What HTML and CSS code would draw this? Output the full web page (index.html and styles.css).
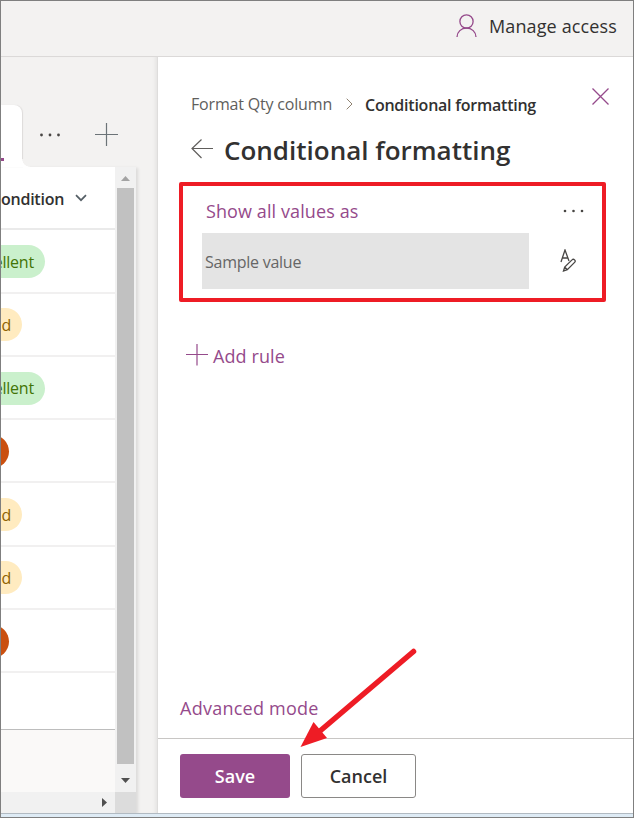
FILE: index.html
```html
<!DOCTYPE html>
<html lang="en">
<head>
  <meta charset="UTF-8">
  <title>Conditional formatting</title>
  <link rel="stylesheet" href="styles.css">
</head>
<body>
  <div class="window">
    <header class="topbar">
      <svg class="person" width="22" height="24" viewBox="0 0 22 24">
        <circle cx="10.500" cy="7.500" r="6.600"/>
        <path d="M1 23a9.500 9 0 0 1 19 0"/>
      </svg>
      <span class="manage">Manage access</span>
    </header>

    <main class="main">
      <section class="list">
        <div class="tabs">
          <div class="tab"><span class="tab-mark"></span></div>
          <svg class="dots tab-dots" width="20" height="4" viewBox="0 0 20 4"><circle cx="1.5" cy="2" r="1.4"/><circle cx="10" cy="2" r="1.4"/><circle cx="18.5" cy="2" r="1.4"/></svg>
          <svg class="tab-plus" width="23" height="23" viewBox="0 0 23 23"><path d="M0 11.5h23M11.5 0v23"/></svg>
        </div>
        <div class="sheet">
          <div class="grid">
            <div class="row head"><span class="head-text">ondition</span>
              <svg class="chevron" width="12" height="8" viewBox="0 0 12 8"><path d="M1 1.2l5 5 5-5"/></svg>
            </div>
            <div class="row"><span class="pill green">ellent</span></div>
            <div class="row"><span class="pill yellow">d</span></div>
            <div class="row"><span class="pill green">ellent</span></div>
            <div class="row"><span class="pill red"></span></div>
            <div class="row"><span class="pill yellow">d</span></div>
            <div class="row"><span class="pill yellow">d</span></div>
            <div class="row"><span class="pill red"></span></div>
            <div class="row last"></div>
            <div class="grid-foot"></div>
            <div class="hscroll"><svg width="5" height="9" viewBox="0 0 5 9"><path d="M0 0l5 4.5L0 9z"/></svg></div>
          </div>
          <div class="vscroll">
            <div class="vbtn up"><svg width="9" height="5" viewBox="0 0 9 5"><path d="M0 5l4.500-5L9 5z"/></svg></div>
            <div class="thumb"></div>
            <div class="vbtn down"><svg width="9" height="5" viewBox="0 0 9 5"><path d="M0 0l4.500 5L9 0z"/></svg></div>
            <div class="corner"></div>
          </div>
        </div>
      </section>

      <aside class="panel">
        <div class="crumbs">
          <span class="crumb">Format Qty column</span>
          <svg class="crumb-sep" width="7" height="12" viewBox="0 0 7 12"><path d="M.7.7L6 6 .7 11.300"/></svg>
          <span class="crumb current">Conditional formatting</span>
          <svg class="close" width="17" height="17" viewBox="0 0 17 17"><path d="M.5.5l16 16M16.500.5l-16 16"/></svg>
        </div>
        <div class="title-row">
          <svg class="back" width="22" height="20" viewBox="0 0 22 20"><path d="M22 9.500H1M10.500.5L1 9.500l9.500 9.500"/></svg>
          <h1 class="title">Conditional formatting</h1>
        </div>

        <div class="rule">
          <div class="rule-head">
            <span class="rule-name">Show all values as</span>
            <svg class="dots" width="21" height="4" viewBox="0 0 21 4"><circle cx="2" cy="2" r="1.300"/><circle cx="10.500" cy="2" r="1.300"/><circle cx="19" cy="2" r="1.300"/></svg>
          </div>
          <div class="rule-body">
            <div class="sample">Sample value</div>
            <svg class="edit" width="16" height="23" viewBox="0 0 16 23">
              <path d="M1 13L5 1l4 11M2.400 9h5.700"/>
              <path d="M3.500 22l1.200-4L12 10.900a1.700 1.700 0 0 1 2.600 2.500L7.300 20.700zM4.700 18l2.600 2.700"/>
            </svg>
          </div>
        </div>

        <div class="add">
          <svg class="add-plus" width="22" height="22" viewBox="0 0 22 22"><path d="M0 10.500h22M11 0v21.500"/></svg>
          <span class="add-text">Add rule</span>
        </div>

        <div class="advanced"><span>Advanced mode</span></div>
        <footer class="actions">
          <button class="btn primary">Save</button>
          <button class="btn">Cancel</button>
        </footer>
      </aside>
    </main>
    <div class="statusbar"></div>

    <svg class="arrow" width="120" height="104" viewBox="0 0 120 104">
      <path class="arrow-line" d="M113.500 6.500L20 86"/>
      <path class="arrow-head" d="M.5 102l13-25 13.500 16z"/>
    </svg>
  </div>
</body>
</html>
```

FILE: styles.css
```css
* {
  box-sizing: border-box;
}
body {
  margin: 0;
  font-family: "Open Sans", "Noto Sans", sans-serif;
  font-size: 16px;
  color: #323130;
}
svg {
  display: block;
  flex: none;
  fill: none;
}
.window {
  position: relative;
  display: flex;
  flex-direction: column;
  width: 634px;
  height: 818px;
  border: 1px solid #7f7f7f;
  background: #f3f2f1;
  overflow: hidden;
}
.topbar {
  display: flex;
  align-items: center;
  gap: 11px;
  height: 56px;
  padding: 0 0 5px 455px;
  border-bottom: 1px solid #dbd9d8;
  white-space: nowrap;
}
.person {
  stroke: #954a8b;
  stroke-width: 1.3;
}
.manage {
  font-size: 18px;
  letter-spacing: 0.12px;
}
.main {
  display: flex;
  flex: 1;
  min-height: 0;
}

/* list on the left */
.list {
  width: 157px;
  flex: none;
  border-right: 1px solid #dedddc;
  box-shadow: inset -4px 0 4px -3px rgba(0, 0, 0, 0.08);
}
.tabs {
  display: flex;
  height: 110px;
  padding-top: 48px;
}
.tab {
  position: relative;
  width: 21px;
  height: 62px;
  background: #fff;
  border-radius: 0 8px 0 0;
  box-shadow: 1px 0 1px #dddbda;
}
.tab::after {
  content: "";
  position: absolute;
  left: 21px;
  bottom: 0;
  width: 8px;
  height: 8px;
  background: radial-gradient(circle at 8px 0, #f3f2f1 7.500px, #fff 8px);
}
.tab-mark {
  display: block;
  width: 3px;
  height: 3px;
  margin-top: 53px;
  background: #954a8b;
}
.dots {
  fill: #484644;
}
.tab-dots {
  margin: 28px 0 0 18px;
}
.tab-plus {
  margin: 18px 0 0 35px;
  stroke: #6b7377;
  stroke-width: 1.2;
}
.sheet {
  display: flex;
  width: 135px;
  height: 646px;
  box-shadow: 2px 1px 3px rgba(0, 0, 0, 0.1);
}
.grid {
  width: 114px;
  background: #fff;
}
.row {
  display: flex;
  align-items: center;
  height: 63.250px;
  border-bottom: 2px solid #f1f0f0;
  overflow: hidden;
}
.row.head {
  height: 63.400px;
  padding-top: 2px;
  border-color: #eaeaea;
}
.head-text {
  font-weight: 600;
  letter-spacing: -0.25px;
}
.chevron {
  margin: -2px 0 0 11px;
  stroke: #555f66;
  stroke-width: 1.7;
}
.pill {
  display: flex;
  align-items: center;
  justify-content: flex-end;
  height: 33px;
  margin-top: 1px;
  border-radius: 0 17px 17px 0;
  letter-spacing: -0.2px;
}
.green {
  width: 44px;
  padding-right: 11px;
  background: #caf0cc;
  color: #437406;
}
.yellow {
  width: 21px;
  padding-right: 11px;
  background: #ffebc0;
  color: #8f6200;
}
.red {
  width: 33px;
  margin-left: -25px;
  border-radius: 17px;
  background: #ca5010;
}
.row.last {
  height: 57px;
  border-bottom: 1px solid #bdbdbd;
}
.grid-foot {
  height: 62px;
  background: #faf9f8;
}
.hscroll {
  display: flex;
  align-items: center;
  justify-content: flex-end;
  height: 21px;
  padding-right: 8px;
  background: #f1f1f1;
}
.hscroll svg,
.down svg {
  fill: #505050;
}
.up svg {
  fill: #a3a3a3;
}
.vscroll {
  width: 21px;
  background: #f1f1f1;
}
.vbtn {
  display: flex;
  align-items: center;
  justify-content: center;
  height: 21px;
}
.up {
  padding-top: 2px;
}
.thumb {
  width: 17px;
  height: 576px;
  margin-left: 2px;
  background: #c1c1c1;
}
.down {
  height: 28px;
  padding-top: 5px;
}
.corner {
  height: 21px;
  background: #dcdcdc;
}

/* format panel */
.panel {
  display: flex;
  flex-direction: column;
  flex: 1;
  min-width: 0;
  background: #fff;
}
.crumbs {
  display: flex;
  align-items: center;
  height: 24px;
  margin: 35px 24px 0 33px;
  white-space: nowrap;
}
.crumb {
  width: 141px;
  letter-spacing: -0.18px;
  color: #605e5c;
}
.crumb-sep {
  margin: 0 12px 0 14px;
  stroke: #8f8271;
  stroke-width: 1;
}
.crumb.current {
  width: 173px;
  padding-top: 1px;
  font-weight: 600;
  letter-spacing: -0.24px;
  color: #323130;
}
.close {
  margin: -16px 0 0 auto;
  stroke: #954a8b;
  stroke-width: 1.300;
}
.title-row {
  display: flex;
  align-items: center;
  gap: 11px;
  height: 36px;
  margin: 15px 0 0 33px;
}
.back {
  stroke: #605e5c;
  stroke-width: 1.200;
}
.title {
  margin: 0;
  padding-top: 2px;
  font-size: 26px;
  font-weight: 600;
  line-height: 36px;
  white-space: nowrap;
}
.rule {
  width: 427px;
  height: 120px;
  margin: 15px 0 0 21px;
  padding: 0 18px 0 19px;
  border: 4px solid #ee1c25;
  border-radius: 2px;
}
.rule-head {
  display: flex;
  align-items: center;
  justify-content: space-between;
  height: 47px;
  padding: 3px 0 0 4px;
}
.rule-name,
.add,
.advanced {
  font-size: 18px;
  letter-spacing: 0.1px;
  color: #954a8b;
}
.rule-body {
  display: flex;
  align-items: center;
}
.sample {
  width: 327px;
  height: 56px;
  padding-left: 3px;
  line-height: 58px;
  letter-spacing: -0.25px;
  background: #e4e4e4;
  color: #666;
}
.edit {
  margin: -2px 0 0 31px;
  stroke: #484644;
  stroke-width: 1.300;
}
.add {
  display: flex;
  align-items: center;
  gap: 5px;
  margin: 40px 0 0 28px;
}
.add-text {
  padding-top: 2px;
}
.add-plus {
  stroke: #954a8b;
  stroke-width: 1.200;
}
.advanced {
  margin: auto 0 0 22px;
  height: 42px;
  letter-spacing: 0.250px;
}
.actions {
  display: flex;
  gap: 11px;
  height: 75px;
  padding: 15px 22px;
  border-top: 1px solid #c8c6c4;
}
.btn {
  width: 115px;
  height: 44px;
  padding: 0;
  border: 1px solid #8a8886;
  border-radius: 3px;
  background: #fff;
  font-family: inherit;
  font-size: 18px;
  font-weight: 600;
  color: #323130;
}
.btn.primary {
  width: 110px;
  border: 0;
  background: #954a8b;
  color: #fff;
}
.statusbar {
  height: 4px;
  border-top: 1px solid #b1bac2;
  background: #deebf5;
}

/* pointer to the save button */
.arrow {
  position: absolute;
  left: 299px;
  top: 644px;
}
.arrow-line {
  stroke: #ee1c25;
  stroke-width: 5.500;
  stroke-linecap: round;
}
.arrow-head {
  fill: #ee1c25;
}
```
